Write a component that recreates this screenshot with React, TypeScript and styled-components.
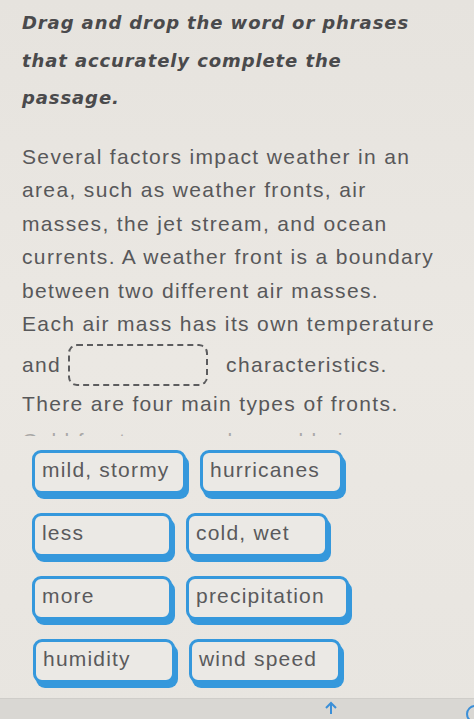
import styled, { createGlobalStyle } from 'styled-components';

const GlobalStyle = createGlobalStyle`
  html, body {
    margin: 0;
    padding: 0;
    background: #e9e6e1;
  }
  body {
    font-family: 'Liberation Sans', Arial, sans-serif;
  }
`;

const Page = styled.div`
  width: 474px;
  height: 719px;
  display: flex;
  flex-direction: column;
  background: linear-gradient(180deg, #e6e3de 0%, #ebe8e3 50%, #e8e5e0 100%);
  overflow: hidden;
`;

const Content = styled.div`
  flex: 1;
  padding: 4px 0 0 22px;
`;

const Title = styled.h1`
  margin: 0;
  font-family: 'DejaVu Sans', Verdana, sans-serif;
  font-size: 18px;
  font-weight: bold;
  font-style: italic;
  line-height: 37.5px;
  letter-spacing: 0.9px;
  color: #4a4a4c;
  white-space: nowrap;
`;

const Passage = styled.div`
  margin-top: 23px;
  font-size: 21px;
  letter-spacing: 1.35px;
  color: #58585a;
  white-space: nowrap;
`;

const Line = styled.div`
  height: 33.5px;
  line-height: 33.5px;
`;

const BlankLine = styled.div`
  display: flex;
  align-items: center;
  height: 44px;
  margin-top: 2px;
`;

const Blank = styled.span`
  display: inline-block;
  box-sizing: border-box;
  width: 140px;
  height: 42px;
  margin: 0 18px 0 7px;
  border: 2px dashed #5c5c5e;
  border-radius: 9px;
`;

const CutLine = styled.div`
  height: 12px;
  margin-top: 4px;
  overflow: hidden;
  color: #6a6a6c;
  font-size: 21px;
  line-height: 34px;
  letter-spacing: 1.35px;
  opacity: 0.5;
`;

const Bank = styled.div`
  display: flex;
  flex-direction: column;
  gap: 19px;
  margin: 14px 0 0 10px;
`;

const Row = styled.div<{ $shift: number }>`
  display: flex;
  gap: 14px;
  margin-left: ${(p) => p.$shift}px;
`;

const Chip = styled.div<{ $w: number }>`
  box-sizing: border-box;
  width: ${(p) => p.$w}px;
  height: 44px;
  display: flex;
  align-items: center;
  padding: 0 8px 4px 7px;
  border: 3px solid #3598dc;
  border-radius: 9px;
  background: #ebe9e5;
  box-shadow: 3px 5px 0 #3598dc;
  font-size: 21px;
  letter-spacing: 1.2px;
  color: #5a5a5c;
`;

const BottomBar = styled.div`
  height: 20px;
  background: #d9d7d3;
  border-top: 1px solid #cfcdc9;
  display: flex;
  align-items: flex-start;
  justify-content: flex-end;
`;

const ArrowIcon = styled.svg`
  margin: 2px 128px 0 0;
`;

const Circle = styled.div`
  width: 14px;
  height: 14px;
  border: 2px solid #3b8fd8;
  border-radius: 50%;
  margin: 6px -10px 0 0;
`;

const rows: { shift: number; chips: [string, number][] }[] = [
  { shift: 0, chips: [['mild, stormy', 154], ['hurricanes', 143]] },
  { shift: 0, chips: [['less', 140], ['cold, wet', 142]] },
  { shift: 0, chips: [['more', 140], ['precipitation', 163]] },
  { shift: 1, chips: [['humidity', 142], ['wind speed', 152]] },
];

const passage = [
  'Several factors impact weather in an',
  'area, such as weather fronts, air',
  'masses, the jet stream, and ocean',
  'currents. A weather front is a boundary',
  'between two different air masses.',
  'Each air mass has its own temperature',
];

export default function App() {
  return (
    <>
      <GlobalStyle />
      <Page>
        <Content>
          <Title>
            Drag and drop the word or phrases
            <br />
            that accurately complete the
            <br />
            passage.
          </Title>
          <Passage>
            {passage.map((l) => (
              <Line key={l}>{l}</Line>
            ))}
            <BlankLine>
              and
              <Blank />
              characteristics.
            </BlankLine>
            <Line>There are four main types of fronts.</Line>
          </Passage>
          <CutLine>Cold fronts occur when cold air</CutLine>
          <Bank>
            {rows.map((r, i) => (
              <Row key={i} $shift={r.shift}>
                {r.chips.map(([label, w]) => (
                  <Chip key={label} $w={w}>
                    {label}
                  </Chip>
                ))}
              </Row>
            ))}
          </Bank>
        </Content>
        <BottomBar>
          <ArrowIcon width="14" height="14" viewBox="0 0 14 14">
            <path d="M7 13V2M2 7l5-5 5 5" stroke="#3b8fd8" strokeWidth="2" fill="none" />
          </ArrowIcon>
          <Circle />
        </BottomBar>
      </Page>
    </>
  );
}
